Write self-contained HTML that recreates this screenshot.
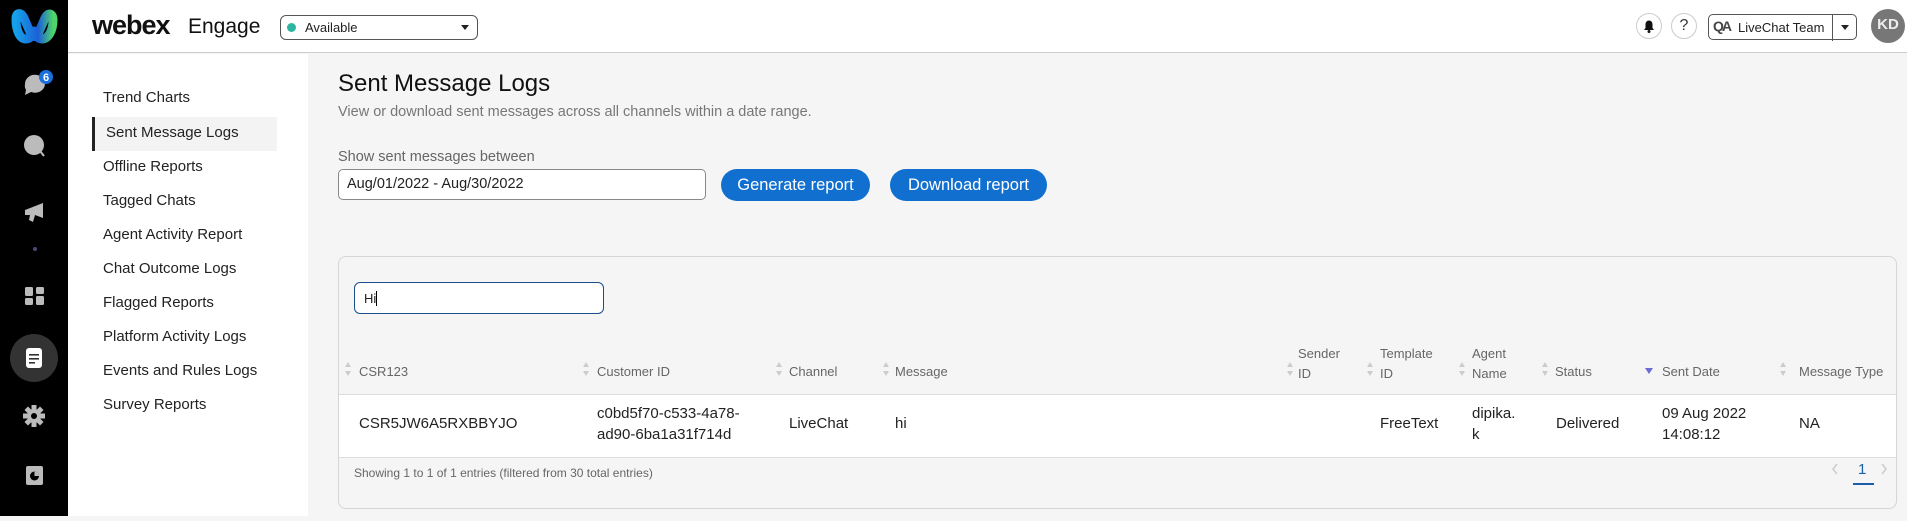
<!DOCTYPE html>
<html><head><meta charset="utf-8"><style>
*{box-sizing:border-box;margin:0;padding:0}
body{width:1907px;height:516px;overflow:hidden;font-family:"Liberation Sans",sans-serif;background:#f5f5f5;position:relative;color:#222}
.abs{position:absolute}
#side{left:0;top:0;width:68px;height:516px;background:#000}
#hdr{left:68px;top:0;width:1839px;height:53px;background:#fff;border-bottom:1px solid #ccc}
#nav{left:68px;top:54px;width:240px;height:462px;background:#fff}
.ni{position:absolute;left:35px;font-size:15px;color:#222}
.h{font-size:13px;color:#666;position:absolute;line-height:20px}
.s{position:absolute;width:6px;height:14px}
.d{font-size:15px;position:absolute;line-height:21px;color:#222}
</style></head><body>
<div id="side" class="abs">
<svg width="68" height="516" viewBox="0 0 68 516">
<defs><linearGradient id="g" x1="0" x2="1"><stop offset="0" stop-color="#16a0e8"/><stop offset="0.6" stop-color="#1c5fd8"/><stop offset="1" stop-color="#4dd46a"/></linearGradient></defs>
<path d="M16 19 C16 12 21 12 24 18 L30 32 C33 38 37 38 39 32 L45 18 C48 12 53 13 53 20 C53 31 48 39 42 39 C37 39 35 34 34 31 C33 34 31 39 26 39 C20 39 16 31 16 19Z" fill="none" stroke="url(#g)" stroke-width="9" stroke-linejoin="round"/>
<path d="M25 84 a10 9 0 1 1 6 8 l-6 3 l1 -5 a10 9 0 0 1 -1 -6z" fill="#bbb"/>
<circle cx="46" cy="77" r="7" fill="#1a6fe0"/><text x="46" y="81" font-size="11" font-weight="bold" fill="#fff" text-anchor="middle" font-family="Liberation Sans">6</text>
<circle cx="34" cy="145" r="10" fill="#bbb"/><line x1="40" y1="151" x2="44" y2="156" stroke="#bbb" stroke-width="2"/>
<path d="M25 210 l18 -7 v15 l-8 -3 l-2 7 l-4 -2 l1 -5 l-5 0z" fill="#bbb"/>
<circle cx="35" cy="249" r="2" fill="#4a4a7a"/>
<rect x="25" y="287" width="8" height="9" rx="1.5" fill="#bbb"/><rect x="25" y="298" width="8" height="7" rx="1.5" fill="#bbb"/><rect x="36" y="287" width="8" height="7" rx="1.5" fill="#bbb"/><rect x="36" y="296" width="8" height="9" rx="1.5" fill="#bbb"/>
<circle cx="34" cy="358" r="24" fill="#333"/>
<rect x="26" y="348" width="16" height="20" rx="3" fill="#fff"/><rect x="29" y="354" width="10" height="1.6" fill="#333"/><rect x="29" y="358" width="10" height="1.6" fill="#333"/><rect x="29" y="362" width="6" height="1.6" fill="#333"/>
<g transform="translate(34,416)" fill="#bbb"><circle r="7"/><g><rect x="-2.5" y="-11" width="5" height="22"/><rect x="-11" y="-2.5" width="22" height="5"/><rect x="-2.5" y="-11" width="5" height="22" transform="rotate(45)"/><rect x="-2.5" y="-11" width="5" height="22" transform="rotate(-45)"/></g><circle r="3" fill="#000"/></g>
<rect x="26" y="466" width="17" height="19" rx="2" fill="#bbb"/><circle cx="34.5" cy="476" r="4.5" fill="#000"/><path d="M34.5 476 v-4.5 a4.5 4.5 0 0 1 4.5 4.5z" fill="#bbb"/>
</svg></div>
<div id="hdr" class="abs">
<div class="abs" style="left:24px;top:10px;font-size:27px;font-weight:bold;letter-spacing:-1px;color:#111">webex</div>
<div class="abs" style="left:120px;top:15px;font-size:21px;color:#111">Engage</div>
<div class="abs" style="left:212px;top:15px;width:198px;height:25px;border:1px solid #555;border-radius:6px">
<div class="abs" style="left:6px;top:7px;width:9px;height:9px;border-radius:50%;background:#2bb5a0"></div>
<div class="abs" style="left:24px;top:4px;font-size:13px;color:#222">Available</div>
<div class="abs" style="right:8px;top:9px;border:4px solid transparent;border-top:5px solid #222"></div></div>
<div class="abs" style="left:1568px;top:13px;width:26px;height:26px;border:1px solid #ccc;border-radius:50%"><svg width="24" height="24"><path d="M7 16h10l-1.5-2v-4a3.5 3.5 0 0 0-7 0v4z" fill="#111"/><circle cx="12" cy="17.5" r="1.5" fill="#111"/></svg></div>
<div class="abs" style="left:1603px;top:13px;width:26px;height:26px;border:1px solid #ccc;border-radius:50%;text-align:center;font-size:16px;line-height:24px;color:#333">?</div>
<div class="abs" style="left:1640px;top:14px;width:149px;height:26px;border:1px solid #555;border-radius:5px">
<div class="abs" style="left:4px;top:3px;font-size:14px;font-weight:bold;color:#444;letter-spacing:-2px">QA</div>
<div class="abs" style="left:29px;top:5px;font-size:13px;color:#222">LiveChat Team</div>
<div class="abs" style="left:123px;top:0;width:1px;height:26px;background:#555"></div>
<div class="abs" style="right:7px;top:10px;border:4px solid transparent;border-top:5px solid #222"></div></div>
<div class="abs" style="left:1803px;top:9px;width:34px;height:34px;border-radius:50%;background:#777;color:#eee;font-size:15px;text-align:center;line-height:31px;font-weight:bold">KD</div>
</div>
<div id="nav" class="abs">
<div class="abs" style="left:24px;top:63px;width:185px;height:34px;background:#f3f3f3;border-left:3px solid #222"></div>
<div class="ni" style="top:35px">Trend Charts</div>
<div class="ni" style="top:70px;left:38px">Sent Message Logs</div>
<div class="ni" style="top:104px">Offline Reports</div>
<div class="ni" style="top:138px">Tagged Chats</div>
<div class="ni" style="top:172px">Agent Activity Report</div>
<div class="ni" style="top:206px">Chat Outcome Logs</div>
<div class="ni" style="top:240px">Flagged Reports</div>
<div class="ni" style="top:274px">Platform Activity Logs</div>
<div class="ni" style="top:308px">Events and Rules Logs</div>
<div class="ni" style="top:342px">Survey Reports</div>
</div>
<div class="abs" style="left:338px;top:70px;font-size:24px;color:#111">Sent Message Logs</div>
<div class="abs" style="left:338px;top:104px;font-size:14.5px;color:#777">View or download sent messages across all channels within a date range.</div>
<div class="abs" style="left:338px;top:149px;font-size:14.5px;color:#666">Show sent messages between</div>
<div class="abs" style="left:338px;top:169px;width:368px;height:31px;background:#fff;border:1px solid #888;border-radius:5px;font-size:14.5px;padding:6px 8px">Aug/01/2022 - Aug/30/2022</div>
<div class="abs" style="left:721px;top:169px;width:149px;height:32px;background:#1170cf;border-radius:16px;color:#fff;font-size:16.5px;text-align:center;line-height:32px">Generate report</div>
<div class="abs" style="left:890px;top:169px;width:157px;height:32px;background:#1170cf;border-radius:16px;color:#fff;font-size:16.5px;text-align:center;line-height:32px">Download report</div>
<div class="abs" style="left:338px;top:256px;width:1559px;height:253px;border:1px solid #d5d5d5;border-radius:8px;background:#f5f5f5;overflow:hidden">
<div class="abs" style="left:15px;top:25px;width:250px;height:32px;background:#fff;border:1.5px solid #1b4f8a;border-radius:6px;font-size:13px;padding:8px 9px">H<span style="border-right:1px solid #000">i</span></div>
<div class="abs" style="left:0;top:137px;width:1559px;height:64px;background:#fff;border-top:1px solid #ddd;border-bottom:1px solid #ddd"></div>
</div>
<svg class="abs" style="left:0;top:0" width="1907" height="516">
<g fill="#ccc">
<path d="M348 362l-3 5h6zM348 376l-3-5h6z"/><path d="M586 362l-3 5h6zM586 376l-3-5h6z"/><path d="M779 362l-3 5h6zM779 376l-3-5h6z"/><path d="M886 362l-3 5h6zM886 376l-3-5h6z"/><path d="M1290 362l-3 5h6zM1290 376l-3-5h6z"/><path d="M1370 362l-3 5h6zM1370 376l-3-5h6z"/><path d="M1462 362l-3 5h6zM1462 376l-3-5h6z"/><path d="M1545 362l-3 5h6zM1545 376l-3-5h6z"/><path d="M1783 362l-3 5h6zM1783 376l-3-5h6z"/>
</g>
<path d="M1645 368h8l-4 6z" fill="#6b6bd6"/>
<path d="M1837 464l-4 5 4 5" stroke="#ccc" fill="none" stroke-width="1.5"/><path d="M1882 464l4 5-4 5" stroke="#ccc" fill="none" stroke-width="1.5"/>
<rect x="1853" y="483" width="21" height="2" fill="#1b5fa8"/>
</svg>
<div class="h" style="left:359px;top:362px">CSR123</div>
<div class="h" style="left:597px;top:362px">Customer ID</div>
<div class="h" style="left:789px;top:362px">Channel</div>
<div class="h" style="left:895px;top:362px">Message</div>
<div class="h" style="left:1298px;top:344px">Sender<br>ID</div>
<div class="h" style="left:1380px;top:344px">Template<br>ID</div>
<div class="h" style="left:1472px;top:344px">Agent<br>Name</div>
<div class="h" style="left:1555px;top:362px">Status</div>
<div class="h" style="left:1662px;top:362px">Sent Date</div>
<div class="h" style="left:1799px;top:362px">Message Type</div>
<div class="d" style="left:359px;top:413px">CSR5JW6A5RXBBYJO</div>
<div class="d" style="left:597px;top:403px">c0bd5f70-c533-4a78-<br>ad90-6ba1a31f714d</div>
<div class="d" style="left:789px;top:413px">LiveChat</div>
<div class="d" style="left:895px;top:413px">hi</div>
<div class="d" style="left:1380px;top:413px">FreeText</div>
<div class="d" style="left:1472px;top:403px">dipika.<br>k</div>
<div class="d" style="left:1556px;top:413px">Delivered</div>
<div class="d" style="left:1662px;top:403px">09 Aug 2022<br>14:08:12</div>
<div class="d" style="left:1799px;top:413px">NA</div>
<div class="abs" style="left:354px;top:466px;font-size:12px;color:#666">Showing 1 to 1 of 1 entries (filtered from 30 total entries)</div>
<div class="abs" style="left:1858px;top:461px;font-size:15px;color:#1b5fa8">1</div>
</body></html>
